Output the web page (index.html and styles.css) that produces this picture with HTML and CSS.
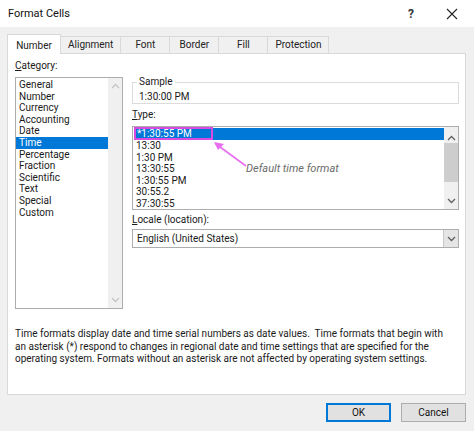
FILE: index.html
```html
<!DOCTYPE html>
<html lang="en">
<head>
    <meta charset="UTF-8">
    <title>Format Cells</title>
    <link rel="stylesheet" href="styles.css">
</head>
<body>
    <div class="window">
        <div class="titlebar">
            <span class="title">Format Cells</span>
            <div class="controls">
                <span class="help">?</span>
                <svg class="close" width="12" height="12" viewBox="0 0 12 12">
                    <path d="M1 1 L11 11 M11 1 L1 11" stroke="#222" stroke-width="1.1" fill="none"/>
                </svg>
            </div>
        </div>

        <div class="dialog">
            <div class="tabs">
                <div class="tab active">Number</div>
                <div class="tab">Alignment</div>
                <div class="tab">Font</div>
                <div class="tab">Border</div>
                <div class="tab">Fill</div>
                <div class="tab">Protection</div>
            </div>

            <div class="panel">
                <div class="columns">
                    <div class="category">
                        <div class="label"><u>C</u>ategory:</div>
                        <div class="listbox cat-list">
                            <ul class="items">
                                <li>General</li>
                                <li>Number</li>
                                <li>Currency</li>
                                <li>Accounting</li>
                                <li>Date</li>
                                <li class="selected">Time</li>
                                <li>Percentage</li>
                                <li>Fraction</li>
                                <li>Scientific</li>
                                <li>Text</li>
                                <li>Special</li>
                                <li>Custom</li>
                            </ul>
                            <div class="scrollbar disabled">
                                <svg class="arrow" width="9" height="6" viewBox="0 0 9 6"><path d="M1 5 L4.5 1.5 L8 5" /></svg>
                                <svg class="arrow" width="9" height="6" viewBox="0 0 9 6"><path d="M1 1 L4.5 4.5 L8 1" /></svg>
                            </div>
                        </div>
                    </div>

                    <div class="details">
                        <fieldset class="sample">
                            <legend>Sample</legend>
                            <div class="sample-value">1:30:00 PM</div>
                        </fieldset>

                        <div class="label"><u>T</u>ype:</div>
                        <div class="listbox type-list">
                            <ul class="items">
                                <li class="selected"><span class="marked">*1:30:55 PM</span></li>
                                <li>13:30</li>
                                <li>1:30 PM</li>
                                <li>13:30:55</li>
                                <li>1:30:55 PM</li>
                                <li>30:55.2</li>
                                <li>37:30:55</li>
                            </ul>
                            <div class="scrollbar">
                                <svg class="arrow" width="9" height="6" viewBox="0 0 9 6"><path d="M1 5 L4.5 1.5 L8 5" /></svg>
                                <div class="thumb"></div>
                                <svg class="arrow" width="9" height="6" viewBox="0 0 9 6"><path d="M1 1 L4.5 4.5 L8 1" /></svg>
                            </div>
                            <svg class="callout-arrow" width="40" height="30" viewBox="0 0 40 30">
                                <path d="M33 25 L3 3" stroke="#e86ef0" stroke-width="1.6" fill="none"/>
                                <path d="M1 1 L11 3 L5 9 Z" fill="#e86ef0"/>
                            </svg>
                            <span class="callout-text">Default time format</span>
                        </div>

                        <div class="label locale-label"><u>L</u>ocale (location):</div>
                        <div class="select">
                            <span>English (United States)</span>
                            <span class="drop">
                                <svg width="9" height="6" viewBox="0 0 9 6"><path d="M1 1 L4.5 4.5 L8 1" /></svg>
                            </span>
                        </div>
                    </div>
                </div>

                <p class="description">
                    Time formats display date and time serial numbers as date values.&nbsp; Time formats that begin with<br>
                    an asterisk (*) respond to changes in regional date and time settings that are specified for the<br>
                    operating system. Formats without an asterisk are not affected by operating system settings.
                </p>
            </div>

            <div class="footer">
                <button class="btn default">OK</button>
                <button class="btn">Cancel</button>
            </div>
        </div>
    </div>
</body>
</html>
```

FILE: styles.css
```css
* {
    margin: 0;
    padding: 0;
    box-sizing: border-box;
}

body {
    width: 474px;
    height: 431px;
    overflow: hidden;
    font-family: Roboto, 'Noto Sans', sans-serif;
    font-size: 10px;
    color: #1a1a1a;
    background: #f0f0f0;
}

.window {
    height: 431px;
    display: flex;
    flex-direction: column;
}

.titlebar {
    height: 27px;
    background: #fff;
    display: flex;
    align-items: center;
    justify-content: space-between;
    padding: 0 16px 0 8px;
}

.title {
    font-size: 11px;
    color: #111;
}

.controls {
    display: flex;
    align-items: center;
    gap: 32px;
}

.help {
    font-size: 12px;
    font-weight: bold;
    color: #333;
}

.dialog {
    flex: 1;
    background: #f0f0f0;
    padding: 0 8px 0 7px;
}

.tabs {
    display: flex;
    align-items: flex-end;
    height: 26px;
    padding-top: 7px;
}

.tab {
    height: 17px;
    line-height: 16px;
    min-width: 50px;
    text-align: center;
    padding: 0 7px;
    border: 1px solid #d9d9d9;
    border-bottom: none;
    margin-left: -1px;
    background: #f0f0f0;
    color: #222;
}

.tab.active {
    height: 20px;
    line-height: 21px;
    margin-left: 0;
    width: 54px;
    background: #fff;
    position: relative;
    top: 1px;
    z-index: 1;
}

.panel {
    height: 342px;
    background: #fff;
    border: 1px solid #d9d9d9;
    padding: 6px 0 0 7px;
}

.columns {
    display: flex;
    gap: 9px;
}

.label {
    height: 12px;
    line-height: 12px;
    margin-bottom: 5px;
}

.label u {
    text-decoration-thickness: 1px;
    text-underline-offset: 1px;
}

.category {
    width: 108px;
}

.listbox {
    border: 1px solid #adadad;
    background: #fff;
    display: flex;
    position: relative;
}

.cat-list {
    height: 232px;
}

.items {
    list-style: none;
    flex: 1;
    padding-top: 1px;
}

.items li {
    height: 11.6px;
    line-height: 11.6px;
    padding-left: 3px;
    white-space: nowrap;
}

.items li.selected {
    background: #0078d7;
    color: #fff;
}

.scrollbar {
    width: 14px;
    background: #f0f0f0;
    display: flex;
    flex-direction: column;
    align-items: center;
    justify-content: space-between;
    padding: 5px 0 5px;
}

.scrollbar .arrow path,
.drop path {
    stroke: #606060;
    stroke-width: 1.3;
    fill: none;
}

.scrollbar.disabled .arrow path {
    stroke: #c4c4c4;
}

.thumb {
    width: 14px;
    height: 39px;
    background: #cdcdcd;
    margin: 2px 0 auto;
}

.details {
    width: 327px;
    padding-top: 16px;
}

.sample {
    border: 1px solid #dcdcdc;
    height: 28px;
    padding: 0 6px;
    margin-bottom: 5px;
}

.sample legend {
    padding: 0 2px;
    margin-left: -2px;
    line-height: 12px;
}

.sample-value {
    line-height: 12px;
    padding-top: 3px;
}

.type-list {
    height: 84px;
}

.type-list .items li.selected {
    height: 12px;
    margin-left: 1px;
    padding-left: 0;
}

.marked {
    display: inline-block;
    width: 79px;
    height: 13px;
    margin-top: -1px;
    border: 2px solid #d94be0;
    line-height: 10px;
    padding-left: 1px;
}

.type-list .scrollbar {
    padding: 8px 0 5px;
}

.callout-arrow {
    position: absolute;
    left: 80px;
    top: 14px;
}

.callout-text {
    position: absolute;
    left: 113px;
    top: 35px;
    font-style: italic;
    font-size: 11px;
    color: #6b6b6b;
}

.locale-label {
    margin-top: 4px;
    margin-bottom: 3px;
}

.select {
    height: 19px;
    border: 1px solid #adadad;
    display: flex;
    align-items: center;
    justify-content: space-between;
    padding-left: 4px;
}

.drop {
    width: 15px;
    height: 17px;
    background: #e5e5e5;
    border-left: 1px solid #c8c8c8;
    display: flex;
    align-items: center;
    justify-content: center;
}

.description {
    margin-top: 19px;
    line-height: 12.7px;
    white-space: nowrap;
}

.footer {
    display: flex;
    justify-content: flex-end;
    gap: 10px;
    padding-top: 8px;
}

.btn {
    width: 65px;
    height: 19px;
    font-family: inherit;
    font-size: 10px;
    color: #111;
    background: #e1e1e1;
    border: 1px solid #adadad;
}

.btn.default {
    border: 2px solid #0078d7;
}
```
